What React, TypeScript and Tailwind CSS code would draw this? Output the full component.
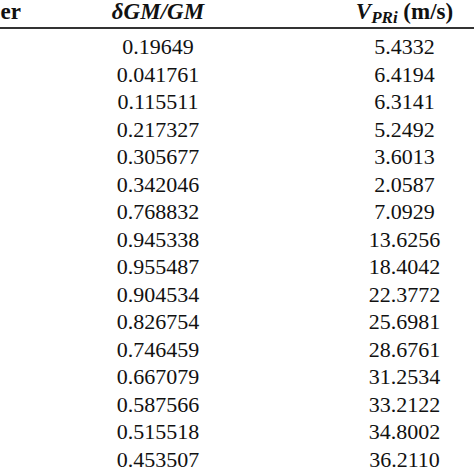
const rows: [string, string][] = [
  ["0.19649", "5.4332"],
  ["0.041761", "6.4194"],
  ["0.115511", "6.3141"],
  ["0.217327", "5.2492"],
  ["0.305677", "3.6013"],
  ["0.342046", "2.0587"],
  ["0.768832", "7.0929"],
  ["0.945338", "13.6256"],
  ["0.955487", "18.4042"],
  ["0.904534", "22.3772"],
  ["0.826754", "25.6981"],
  ["0.746459", "28.6761"],
  ["0.667079", "31.2534"],
  ["0.587566", "33.2122"],
  ["0.515518", "34.8002"],
  ["0.453507", "36.2110"],
];

export default function App() {
  return (
    <div className="w-[474px] h-[474px] overflow-hidden bg-white text-[#111] font-['Liberation_Serif',serif] text-[22px]">
      <div className="grid grid-cols-[21px_274px_1fr] h-[29px] leading-[24px] text-[23px] font-bold border-b-2 border-[#333]">
        <div className="flex justify-end overflow-hidden whitespace-nowrap">Number</div>
        <div className="text-center italic">δGM/GM</div>
        <div className="pl-[40px] text-center whitespace-nowrap">
          <span className="italic">V</span>
          <span className="italic text-[17px] relative top-[4px]">PRi</span>
          <span> (m/s)</span>
        </div>
      </div>
      <div className="pt-[4px]">
        {rows.map(([a, b]) => (
          <div key={a} className="grid grid-cols-[21px_274px_1fr] h-[27.5px] leading-[27.5px]">
            <div />
            <div className="text-center">{a}</div>
            <div className="pl-[40px] text-center">{b}</div>
          </div>
        ))}
      </div>
    </div>
  );
}
